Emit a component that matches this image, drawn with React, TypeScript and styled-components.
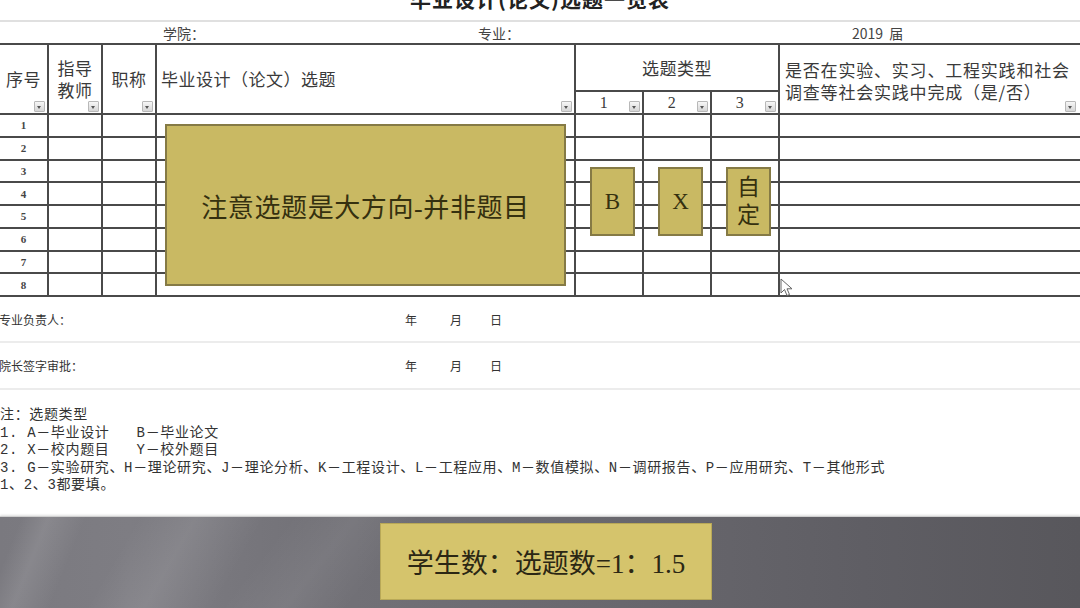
import React from "react";
import styled, { createGlobalStyle } from "styled-components";

const GlobalStyle = createGlobalStyle`
  html, body { margin: 0; padding: 0; background: #fff; }
  body {
    width: 1080px; height: 608px; overflow: hidden;
    font-family: "Noto Sans CJK SC", "Noto Sans", sans-serif;
  }
`;

const LINE = "#4a4a4a";

const Page = styled.div`
  width: 1080px;
  height: 608px;
  display: flex;
  flex-direction: column;
  overflow: hidden;
  background: #fff;
`;

const Sheet = styled.div`
  flex: 1;
  display: flex;
  flex-direction: column;
  overflow: hidden;
`;

const TitleBar = styled.div`
  height: 22px;
  box-sizing: border-box;
  border-bottom: 2px solid #e0e0e0;
  display: flex;
  justify-content: center;
  overflow: hidden;
`;

const TitleText = styled.h1`
  margin: -14px 0 0;
  font-size: 21px;
  line-height: 24px;
  font-weight: 700;
  color: #222;
  letter-spacing: 1px;
`;

const InfoRow = styled.div`
  height: 23px;
  box-sizing: border-box;
  border-bottom: 2px solid ${LINE};
  display: grid;
  grid-template-columns: 163px 315px 374px 1fr;
  align-items: center;
  font-size: 14px;
  color: #444;
  white-space: pre;
`;

const TableWrap = styled.div`
  position: relative;
`;

const Grid = styled.div`
  display: grid;
  grid-template-columns: 49px 54px 54px 419px 68px 68px 68px 1fr;
  grid-template-rows: 47px 23px repeat(8, 22.75px);
`;

const Cell = styled.div<{ $noRight?: boolean }>`
  position: relative;
  box-sizing: border-box;
  border-right: ${(p) => (p.$noRight ? "none" : `2px solid ${LINE}`)};
  border-bottom: 2px solid ${LINE};
`;

const HeadCell = styled(Cell)<{ $col: string; $row: string; $align?: string; $valign?: string }>`
  grid-column: ${(p) => p.$col};
  grid-row: ${(p) => p.$row};
  display: flex;
  justify-content: ${(p) => p.$align || "center"};
  align-items: ${(p) => p.$valign || "center"};
  text-align: center;
  font-size: 17px;
  line-height: 22px;
  letter-spacing: 0.5px;
  color: #3a3a3a;
  padding: 0 4px;
`;

const LeftHead = styled(HeadCell)`
  padding: 0 0 0 4px;
  text-align: left;
`;

const LongHead = styled(HeadCell)`
  padding: 14px 0 0 5px;
  text-align: left;
  letter-spacing: 0.8px;
  white-space: nowrap;
`;

const NumHead = styled(HeadCell)`
  font-family: "Liberation Serif", serif;
  font-size: 16px;
  padding-right: 14px;
`;

const Drop = styled.span<{ $inset?: number }>`
  position: absolute;
  right: ${(p) => p.$inset ?? 2}px;
  bottom: 1px;
  width: 11px;
  height: 11px;
  box-sizing: border-box;
  border: 1px solid #b8b8b8;
  border-radius: 1px;
  background: linear-gradient(#f6f6f6, #d6d6d6);
  &::after {
    content: "";
    position: absolute;
    left: 2px;
    top: 4px;
    border-left: 2.5px solid transparent;
    border-right: 2.5px solid transparent;
    border-top: 3px solid #555;
  }
`;

const NumCell = styled(Cell)`
  display: flex;
  align-items: center;
  justify-content: center;
  font-family: "Liberation Serif", serif;
  font-size: 11px;
  font-weight: 700;
  color: #444;
`;

const Note = styled.div`
  position: absolute;
  box-sizing: border-box;
  background: #c9b963;
  border: 2px solid #857a45;
  display: flex;
  align-items: center;
  justify-content: center;
  font-family: "Liberation Serif", "Noto Sans CJK SC", serif;
  color: #35300f;
`;

const BigNote = styled(Note)`
  left: 165px;
  top: 79px;
  width: 401px;
  height: 162px;
  font-size: 26px;
  letter-spacing: 0.6px;
`;

const TypeNote = styled(Note)<{ $x: number }>`
  left: ${(p) => p.$x}px;
  top: 122px;
  width: 45px;
  height: 69px;
  font-size: 23px;
  line-height: 28px;
  text-align: center;
`;

const Cursor = styled.svg`
  position: absolute;
  left: 780px;
  top: 233px;
`;

const SignRow = styled.div<{ $h: number }>`
  height: ${(p) => p.$h}px;
  box-sizing: border-box;
  border-bottom: 2px solid #ececec;
  display: grid;
  grid-template-columns: 405px 45px 40px 1fr;
  align-items: center;
  font-size: 12px;
  color: #333;
`;

const SignLabel = styled.span`
  margin-left: -1px;
`;

const Notes = styled.div`
  padding-top: 17px;
  font-family: "Liberation Mono", "Noto Sans CJK SC", monospace;
  font-size: 14px;
  line-height: 17.5px;
  letter-spacing: 0.65px;
  color: #333;
  white-space: pre;
`;

const Band = styled.div`
  height: 92px;
  flex-shrink: 0;
  box-sizing: border-box;
  border-top: 1px solid #cfcfcf;
  box-shadow: 0 -1px 2px rgba(0, 0, 0, 0.12);
  padding: 6px 0 8px 380px;
  display: flex;
  background:
    linear-gradient(112deg, transparent 0px, transparent 20px, rgba(255,255,255,0.10) 45px, transparent 80px),
    linear-gradient(120deg, transparent 0px, transparent 120px, rgba(255,255,255,0.09) 170px, transparent 230px),
    linear-gradient(128deg, transparent 0px, transparent 230px, rgba(255,255,255,0.06) 280px, transparent 330px),
    linear-gradient(90deg, #7a797f 0%, #7e7d83 12%, #727177 30%, #69686e 55%, #5f5e64 80%, #58575c 100%);
`;

const RatioBox = styled.div`
  width: 332px;
  height: 77px;
  box-sizing: border-box;
  background: #d5c46c;
  border: 1px solid #b8a857;
  display: flex;
  align-items: center;
  justify-content: center;
  font-family: "Liberation Serif", "Noto Sans CJK SC", serif;
  font-size: 27px;
  color: #2b2714;
`;

const cols = [1, 2, 3, 4, 5, 6, 7, 8];
const rows = [1, 2, 3, 4, 5, 6, 7, 8];

export default function App() {
  return (
    <Page>
      <GlobalStyle />
      <Sheet>
        <TitleBar>
          <TitleText>毕业设计(论文)选题一览表</TitleText>
        </TitleBar>
        <InfoRow>
          <span />
          <span>学院：</span>
          <span>专业：</span>
          <span>2019  届</span>
        </InfoRow>
        <TableWrap>
          <Grid>
            <HeadCell $col="1" $row="1 / 3">序号<Drop /></HeadCell>
            <HeadCell $col="2" $row="1 / 3">指导教师<Drop /></HeadCell>
            <HeadCell $col="3" $row="1 / 3">职称<Drop /></HeadCell>
            <LeftHead $col="4" $row="1 / 3" $align="flex-start">毕业设计（论文）选题<Drop /></LeftHead>
            <HeadCell $col="5 / 8" $row="1">选题类型</HeadCell>
            <LongHead $col="8" $row="1 / 3" $align="flex-start" $valign="flex-start" $noRight>
              是否在实验、实习、工程实践和社会<br />调查等社会实践中完成（是/否）
              <Drop $inset={4} />
            </LongHead>
            <NumHead $col="5" $row="2">1<Drop /></NumHead>
            <NumHead $col="6" $row="2">2<Drop /></NumHead>
            <NumHead $col="7" $row="2">3<Drop /></NumHead>
            {rows.map((r) =>
              cols.map((c) =>
                c === 1 ? (
                  <NumCell key={`${r}-${c}`}>{r}</NumCell>
                ) : (
                  <Cell key={`${r}-${c}`} $noRight={c === 8} />
                )
              )
            )}
          </Grid>
          <BigNote>注意选题是大方向-并非题目</BigNote>
          <TypeNote $x={590}>B</TypeNote>
          <TypeNote $x={658}>X</TypeNote>
          <TypeNote $x={726}>自<br />定</TypeNote>
          <Cursor width="14" height="20" viewBox="0 0 14 20">
            <path d="M1 1 L1 15 L4.5 11.5 L7 17.5 L9.5 16.5 L7 10.8 L12 10.8 Z" fill="#fff" stroke="#666" strokeWidth="1" strokeLinejoin="round" />
          </Cursor>
        </TableWrap>
        <SignRow $h={46}>
          <SignLabel>专业负责人：</SignLabel>
          <span>年</span>
          <span>月</span>
          <span>日</span>
        </SignRow>
        <SignRow $h={47}>
          <SignLabel>院长签字审批：</SignLabel>
          <span>年</span>
          <span>月</span>
          <span>日</span>
        </SignRow>
        <Notes>
          {"注：选题类型\n" +
            "1. A－毕业设计   B－毕业论文\n" +
            "2. X－校内题目   Y－校外题目\n" +
            "3. G－实验研究、H－理论研究、J－理论分析、K－工程设计、L－工程应用、M－数值模拟、N－调研报告、P－应用研究、T－其他形式\n" +
            "1、2、3都要填。"}
        </Notes>
      </Sheet>
      <Band>
        <RatioBox>学生数：选题数=1：1.5</RatioBox>
      </Band>
    </Page>
  );
}
